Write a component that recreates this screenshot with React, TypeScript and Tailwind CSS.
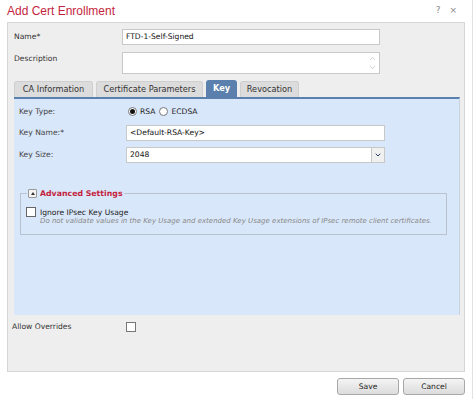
import { ChevronDown, ChevronUp } from "lucide-react";

const body = { fontFamily: '"DejaVu Sans", Verdana, sans-serif' };

function Radio({ checked, label }: { checked?: boolean; label: string }) {
  return (
    <span className="flex items-center gap-[3px]">
      <span className="w-[9px] h-[9px] rounded-full border border-[#777] bg-white flex items-center justify-center">
        {checked && <span className="w-[5px] h-[5px] rounded-full bg-[#111]" />}
      </span>
      <span>{label}</span>
    </span>
  );
}

function Tab({ label, active, w }: { label: string; active?: boolean; w: string }) {
  return (
    <div
      className={
        active
          ? `${w} h-[17px] rounded-t-[3px] bg-[#5b80ad] text-white font-bold flex items-center justify-center text-[8.2px]`
          : `${w} h-[16px] rounded-t-[3px] bg-[#dcdcdc] border border-b-0 border-[#cfcfcf] text-[#333] flex items-center justify-center text-[8.2px]`
      }
    >
      {label}
    </div>
  );
}

export default function App() {
  return (
    <div className="w-[473px] h-[399px] bg-white text-[7.6px] text-[#333] border-r border-[#e2e2e2]" style={body}>
      {/* header */}
      <div className="h-[22px] flex items-center justify-between pl-[7px] pr-[12px]">
        <span className="text-[12px] text-[#c41f3e]" style={{ fontFamily: '"Liberation Sans", Arial, sans-serif' }}>
          Add Cert Enrollment
        </span>
        <span className="text-[9px] text-[#888] tracking-[3px]">? ×</span>
      </div>

      {/* main panel */}
      <div className="mx-[7px] h-[350px] bg-[#eeeeee] border border-[#d6d6d6] flex flex-col">
        <div className="flex items-center pl-[6px] pt-[6px]">
          <span className="w-[108px]">Name*</span>
          <div className="w-[258px] h-[16px] bg-white border border-[#c8c8c8] flex items-center px-[3px] text-[#111]">
            FTD-1-Self-Signed
          </div>
        </div>
        <div className="flex items-start pl-[6px] pt-[7px]">
          <span className="w-[108px] pt-[1px]">Description</span>
          <div className="w-[258px] h-[22px] bg-white border border-[#c8c8c8] flex justify-end">
            <div className="flex flex-col items-center justify-between py-[1px] pr-[2px] text-[#aaa]">
              <ChevronUp size={9} strokeWidth={1.5} />
              <ChevronDown size={9} strokeWidth={1.5} />
            </div>
          </div>
        </div>

        {/* tabs */}
        <div className="flex items-end gap-[3px] ml-[6px] mt-[6px] h-[17px]">
          <Tab label="CA Information" w="w-[79px]" />
          <Tab label="Certificate Parameters" w="w-[107px]" />
          <Tab label="Key" w="w-[31px]" active />
          <Tab label="Revocation" w="w-[59px]" />
        </div>

        {/* key panel */}
        <div className="ml-[6px] mr-[4px] h-[218px] bg-[#d9e7fa] border-t-2 border-[#5b80ad] border-r border-r-[#c9d3df] flex flex-col">
          <div className="flex items-center pl-[5px] pt-[6px] h-[19px]">
            <span className="w-[109px] text-[#444]">Key Type:</span>
            <span className="flex items-center gap-[4px] text-[#222]">
              <Radio checked label="RSA" />
              <Radio label="ECDSA" />
            </span>
          </div>
          <div className="flex items-center pl-[5px] mt-[7px]">
            <span className="w-[107px] text-[#444]">Key Name:*</span>
            <div className="w-[259px] h-[16px] bg-white border border-[#c8c8c8] flex items-center px-[3px] text-[#111]">
              &lt;Default-RSA-Key&gt;
            </div>
          </div>
          <div className="flex items-center pl-[5px] mt-[6px]">
            <span className="w-[107px] text-[#444]">Key Size:</span>
            <div className="w-[259px] h-[16px] bg-white border border-[#c8c8c8] flex items-center text-[#111]">
              <span className="flex-1 px-[3px]">2048</span>
              <span className="w-[13px] h-full border-l border-[#c8c8c8] bg-[#f0f0f0] flex items-center justify-center text-[#2c3e6b]">
                <ChevronDown size={8} strokeWidth={3} />
              </span>
            </div>
          </div>

          {/* advanced settings */}
          <div className="relative ml-[6px] mr-[12px] mt-[30px] h-[42px] border border-[#b9c3cf]">
            <div className="absolute -top-[6px] left-[6px] flex items-center gap-[3px] bg-[#d9e7fa] px-[1px]">
              <span className="w-[9px] h-[9px] border border-[#999] bg-[#f4f4f4] rounded-[1px] flex items-center justify-center">
                <span className="w-0 h-0 border-l-[2.5px] border-r-[2.5px] border-b-[3px] border-l-transparent border-r-transparent border-b-[#333]" />
              </span>
              <span className="text-[#c41f3e] font-bold text-[7.8px]">Advanced Settings</span>
            </div>
            <div className="flex items-start pl-[5px] pt-[14px] gap-[4px]">
              <span className="w-[10px] h-[10px] border border-[#666] bg-white -mt-[1px]" />
              <div className="flex flex-col leading-[9px]">
                <span className="text-[#222]">Ignore IPsec Key Usage</span>
                <span className="italic text-[7px] text-[#888]">
                  Do not validate values in the Key Usage and extended Key Usage extensions of IPsec remote client certificates.
                </span>
              </div>
            </div>
          </div>
        </div>

        <div className="flex items-center pl-[4px] mt-[6px]">
          <span className="w-[114px]">Allow Overrides</span>
          <span className="w-[10px] h-[10px] border border-[#777] bg-white" />
        </div>
      </div>

      {/* footer */}
      <div className="flex justify-end gap-[4px] mr-[7px] mt-[6px]">
        <button className="w-[62px] h-[17px] rounded-[3px] border border-[#a8a8a8] bg-gradient-to-b from-[#f4f4f4] to-[#dcdcdc] text-[#222]">
          Save
        </button>
        <button className="w-[62px] h-[17px] rounded-[3px] border border-[#a8a8a8] bg-gradient-to-b from-[#f4f4f4] to-[#dcdcdc] text-[#222]">
          Cancel
        </button>
      </div>
    </div>
  );
}
